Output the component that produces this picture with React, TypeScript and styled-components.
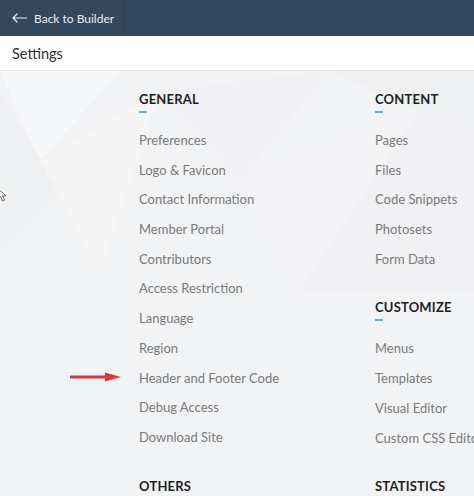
import React from 'react'
import styled, { createGlobalStyle } from 'styled-components'

const GlobalStyle = createGlobalStyle`
  html, body {
    margin: 0;
    padding: 0;
    background: #f2f3f5;
  }
  body {
    font-family: Lato, 'Open Sans', sans-serif;
  }
`

const Page = styled.div`
  width: 474px;
  height: 496px;
  overflow: hidden;
  display: flex;
  flex-direction: column;
`

const TopBar = styled.div`
  height: 36px;
  flex-shrink: 0;
  background-color: #34475e;
  display: flex;
`

const BackButton = styled.div`
  width: 124px;
  box-sizing: border-box;
  display: flex;
  align-items: center;
  gap: 7px;
  padding-left: 12px;
  border-right: 1px solid #2d3e53;
  color: #e9eef3;
  font-size: 12px;
  cursor: pointer;
`

const TitleBar = styled.div`
  height: 35px;
  flex-shrink: 0;
  box-sizing: border-box;
  background-color: #fff;
  border-bottom: 1px solid #e4e6ea;
  display: flex;
  align-items: center;
  padding-left: 12px;
  font-size: 14.5px;
  color: #2f2f2f;
`

const Body = styled.div`
  position: relative;
  flex: 1;
  background-color: #f2f3f5;
  overflow: hidden;
`

const Facets = styled.svg`
  position: absolute;
  inset: 0;
  pointer-events: none;
`

const Columns = styled.div`
  position: relative;
  display: grid;
  grid-template-columns: 236px 1fr;
  padding-left: 139px;
  padding-top: 20px;
`

const Column = styled.div`
  display: flex;
  flex-direction: column;
  gap: 25px;
`

const Section = styled.div`
  display: flex;
  flex-direction: column;
`

const SectionTitle = styled.div`
  font-size: 13px;
  line-height: 16px;
  font-weight: 700;
  letter-spacing: 0.2px;
  color: #1f1f1f;
  white-space: nowrap;
`

const Underline = styled.span`
  display: block;
  width: 8px;
  height: 2px;
  margin-top: 4px;
  margin-bottom: 13px;
  background-color: #5cb6e2;
`

const Item = styled.a`
  display: block;
  height: 29.7px;
  line-height: 29.7px;
  font-size: 13px;
  color: #7a7a7a;
  white-space: nowrap;
  text-decoration: none;
  cursor: pointer;
`

const Pointer = styled.svg`
  position: absolute;
  left: 70px;
  top: 299px;
`

const Cursor = styled.svg`
  position: absolute;
  left: -3px;
  top: 117px;
`

type SectionData = { title: string; items: string[] }

const leftSections: SectionData[] = [
  {
    title: 'GENERAL',
    items: [
      'Preferences',
      'Logo & Favicon',
      'Contact Information',
      'Member Portal',
      'Contributors',
      'Access Restriction',
      'Language',
      'Region',
      'Header and Footer Code',
      'Debug Access',
      'Download Site',
    ],
  },
  { title: 'OTHERS', items: [] },
]

const rightSections: SectionData[] = [
  { title: 'CONTENT', items: ['Pages', 'Files', 'Code Snippets', 'Photosets', 'Form Data'] },
  { title: 'CUSTOMIZE', items: ['Menus', 'Templates', 'Visual Editor', 'Custom CSS Editor'] },
  { title: 'STATISTICS', items: [] },
]

const SettingsSection: React.FC<SectionData> = ({ title, items }) => (
  <Section>
    <SectionTitle>{title}</SectionTitle>
    <Underline />
    {items.map((item) => (
      <Item key={item}>{item}</Item>
    ))}
  </Section>
)

export default function App () {
  return (
    <Page>
      <GlobalStyle />
      <TopBar>
        <BackButton>
          <svg width="15" height="10" viewBox="0 0 15 10" fill="none">
            <path d="M14.5 5H1M5 1L1 5l4 4" stroke="#e9eef3" strokeWidth="1.2" strokeLinecap="round" strokeLinejoin="round" />
          </svg>
          Back to Builder
        </BackButton>
      </TopBar>
      <TitleBar>Settings</TitleBar>
      <Body>
        {/* faint low-poly backdrop */}
        <Facets width="474" height="425" viewBox="0 0 474 425">
          <polygon points="0,0 120,0 40,90" fill="#ffffff" opacity="0.35" />
          <polygon points="0,20 60,120 0,180" fill="#ebecef" opacity="0.35" />
          <polygon points="40,90 160,20 100,200" fill="#f7f7f8" opacity="0.5" />
          <polygon points="160,20 330,0 240,110" fill="#eeeff1" opacity="0.3" />
          <polygon points="240,110 420,40 300,220" fill="#f7f7f8" opacity="0.45" />
          <polygon points="330,0 474,0 474,60 420,40" fill="#ebecef" opacity="0.35" />
          <polygon points="420,40 474,60 474,220 300,220" fill="#eff0f2" opacity="0.3" />
        </Facets>
        <Cursor width="12" height="14" viewBox="0 0 12 14">
          <path d="M1 1L1 11L3.5 8.5L5.5 13L7.5 12L5.5 7.8L9 7.8Z" fill="#fff" stroke="#555" strokeWidth="0.9" strokeLinejoin="round" />
        </Cursor>
        <Pointer width="52" height="14" viewBox="0 0 52 14">
          <path d="M1 7H37" stroke="#d9363e" strokeWidth="3" strokeLinecap="round" />
          <path d="M35 2.5L51 7L35 11.5Z" fill="#d9363e" />
        </Pointer>
        <Columns>
          <Column>
            {leftSections.map((s) => (
              <SettingsSection key={s.title} {...s} />
            ))}
          </Column>
          <Column>
            {rightSections.map((s) => (
              <SettingsSection key={s.title} {...s} />
            ))}
          </Column>
        </Columns>
      </Body>
    </Page>
  )
}
